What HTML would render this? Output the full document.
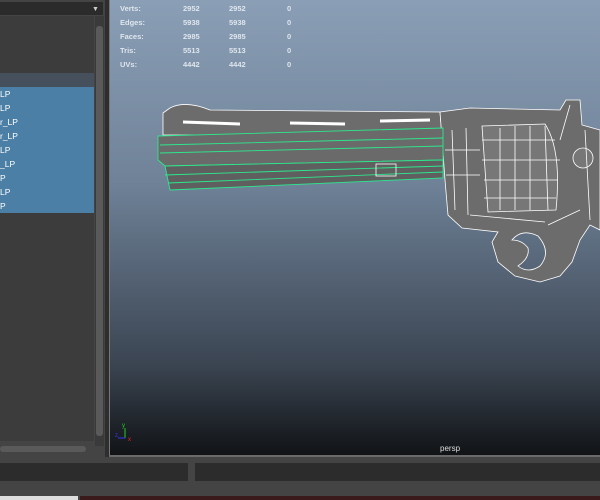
<!DOCTYPE html>
<html><head><style>
body{margin:0;width:600px;height:500px;overflow:hidden;background:#444;font-family:"Liberation Sans",sans-serif;position:relative}
.a{position:absolute}
.lst div{height:14px;font-size:8.5px;color:#fff;padding-left:0;line-height:14px}
.hud{font-size:7.5px;color:#dfe6ee;font-weight:bold}
</style></head><body>
<div class="a" style="left:0;top:0;width:108px;height:455px;background:#444"></div>
<div class="a" style="left:0;top:2px;width:103px;height:13px;background:#2b2b2b"></div>
<div class="a" style="left:92px;top:6px;font-size:7px;color:#ccc">▼</div>
<div class="a" style="left:0;top:16px;width:94px;height:425px;background:#3c3c3c"></div>
<div class="a" style="left:0;top:73px;width:94px;height:14px;background:#45505c"></div>
<div class="a lst" style="left:0;top:87px;width:94px;height:126px;background:#4b7fa5">
<div>LP</div><div>LP</div><div>r_LP</div><div>r_LP</div><div>LP</div><div>_LP</div><div>P</div><div>LP</div><div>P</div></div>
<div class="a" style="left:95px;top:16px;width:9px;height:430px;background:#3a3a3a"></div>
<div class="a" style="left:96px;top:26px;width:7px;height:410px;background:#5a5a5a;border-radius:3px"></div>
<div class="a" style="left:0;top:446px;width:86px;height:6px;background:#5a5a5a;border-radius:3px"></div>
<div class="a" style="left:105px;top:0;width:4px;height:457px;background:#2e2e2e"></div>
<div class="a" style="left:109px;top:0;width:491px;height:455px;background:linear-gradient(#8a9eb5 0%,#6f8298 40%,#3b4552 80%,#111316 100%);border-left:1px solid #777"></div>
<div class="a" style="left:109px;top:455px;width:491px;height:2px;background:#6a6a6a"></div>
<div class="a hud" style="left:120px;top:2px;line-height:14px">Verts:<br>Edges:<br>Faces:<br>Tris:<br>UVs:</div>
<div class="a hud" style="left:183px;top:2px;line-height:14px">2952<br>5938<br>2985<br>5513<br>4442</div>
<div class="a hud" style="left:229px;top:2px;line-height:14px">2952<br>5938<br>2985<br>5513<br>4442</div>
<div class="a hud" style="left:287px;top:2px;line-height:14px">0<br>0<br>0<br>0<br>0</div>
<svg class="a" style="left:0;top:0" width="600" height="500">
<g stroke="#fff" stroke-width="0.8" fill="#6c6c6c">
<path d="M170 108 Q185 100 210 110 L440 112 L442 135 L163 135 L163 113 Z"/>
<path d="M183 122 L240 124 M290 123 L345 124 M380 121 L430 120" stroke="#fff" stroke-width="3"/>
<path fill-rule="evenodd" d="M440 112 L470 108 L560 110 L566 100 L580 100 L582 125 L600 130 L600 230 L590 225 L580 240 L572 262 L560 276 L540 282 L515 276 L498 262 L492 242 L498 232 L462 228 L448 215 L445 180 Z M512 240 Q522 228 538 236 Q552 252 540 266 Q528 274 518 266 Q530 258 528 248 Q522 240 512 240 Z"/>
<path d="M482 126 L545 124 Q562 150 556 210 L488 212 Z" fill="#777"/>
<circle cx="583" cy="158" r="10" fill="#777"/>
<path d="M452 130 L455 210 M466 128 L468 215 M500 128 L500 210 M515 126 L515 210 M530 126 L530 210 M545 126 L548 210 M482 140 L555 140 M482 160 L560 160 M484 180 L558 180 M484 198 L556 198 M470 215 L545 222 M548 225 L580 210 M570 105 L560 140 M585 130 L590 220 M445 150 L480 150 M446 175 L480 175" fill="none"/>
</g>
<g stroke="#2de88e" stroke-width="0.9" fill="#6a6a6a">
<path d="M158 136 L443 128 L443 160 L165 166 L158 160 Z"/>
<path d="M165 166 L443 160 L443 178 L170 190 Z" fill="#5f5f5f"/>
<path d="M160 145 L443 138 M160 153 L443 146 M165 175 L443 166 M168 183 L443 172" fill="none"/>
</g>
<rect x="376" y="164" width="20" height="12" fill="none" stroke="#fff" stroke-width="0.8"/>
<line x1="125" y1="428" x2="125" y2="438" stroke="#2c2"/>
<line x1="118" y1="438" x2="125" y2="438" stroke="#33f"/>
<text x="128" y="441" font-size="6" fill="#e22">x</text>
<text x="122" y="427" font-size="6" fill="#2c2">y</text>
<text x="115" y="437" font-size="6" fill="#33f">z</text>
</svg>
<div class="a" style="left:440px;top:444px;font-size:8px;color:#ddd">persp</div>
<div class="a" style="left:0;top:457px;width:600px;height:43px;background:#444"></div>
<div class="a" style="left:0;top:463px;width:188px;height:18px;background:#2c2c2c"></div>
<div class="a" style="left:195px;top:463px;width:405px;height:18px;background:#2c2c2c"></div>
<div class="a" style="left:0;top:496px;width:78px;height:4px;background:#ddd"></div>
<div class="a" style="left:80px;top:496px;width:520px;height:4px;background:#3a1a1a"></div>
</body></html>
